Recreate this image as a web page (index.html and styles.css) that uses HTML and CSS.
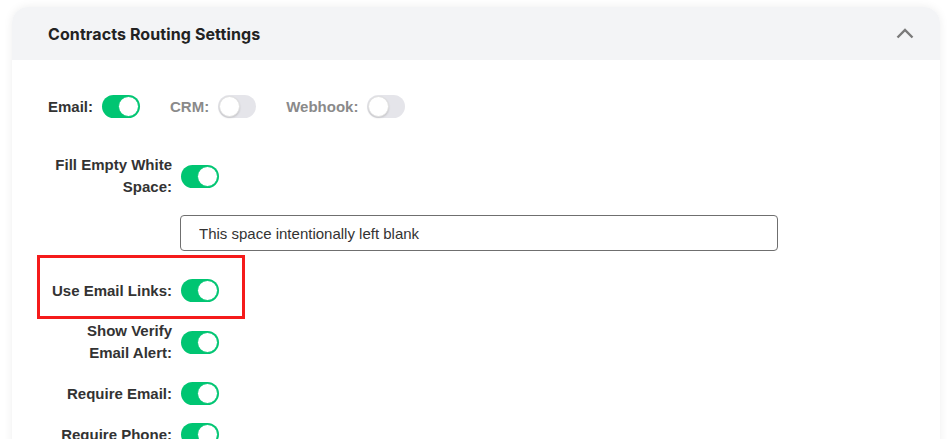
FILE: index.html
```html
<!DOCTYPE html>
<html lang="en">
<head>
    <meta charset="UTF-8">
    <meta name="viewport" content="width=device-width, initial-scale=1.0">
    <title>Contracts Routing Settings</title>
    <link rel="stylesheet" href="styles.css">
</head>
<body>
<div class="page">
    <div class="card">
        <div class="card-header">
            <h2 class="card-title">Contracts Routing Settings</h2>
            <svg class="chevron" width="18" height="11" viewBox="0 0 18 11">
                <polyline points="1.5,9.5 9,2 16.5,9.5" fill="none" stroke="#7a7a7a" stroke-width="2.4"/>
            </svg>
        </div>

        <div class="card-body">
            <div class="channels">
                <div class="channel">
                    <span class="channel-label">Email:</span>
                    <span class="toggle on"></span>
                </div>
                <div class="channel muted">
                    <span class="channel-label">CRM:</span>
                    <span class="toggle"></span>
                </div>
                <div class="channel muted">
                    <span class="channel-label">Webhook:</span>
                    <span class="toggle"></span>
                </div>
            </div>

            <div class="settings">
                <div class="setting">
                    <label class="setting-label">Fill Empty White Space:</label>
                    <span class="toggle on"></span>
                </div>
                <div class="setting-input">
                    <input type="text" value="This space intentionally left blank">
                </div>
                <div class="setting highlighted">
                    <label class="setting-label">Use Email Links:</label>
                    <span class="toggle on"></span>
                    <span class="highlight-box"></span>
                </div>
                <div class="setting">
                    <label class="setting-label">Show Verify Email Alert:</label>
                    <span class="toggle on"></span>
                </div>
                <div class="setting">
                    <label class="setting-label">Require Email:</label>
                    <span class="toggle on"></span>
                </div>
                <div class="setting">
                    <label class="setting-label">Require Phone:</label>
                    <span class="toggle on"></span>
                </div>
            </div>
        </div>
    </div>
</div>
</body>
</html>
```

FILE: styles.css
```css
body {
    margin: 0;
    padding: 0;
    background: #fff;
    font-family: "Liberation Sans", Arial, sans-serif;
    color: #333;
    overflow: hidden;
}

.page {
    padding: 7px 9px 0 12px;
}

.card {
    width: 928px;
    height: 460px;
    border-radius: 16px 16px 0 0;
    background: #fff;
    box-shadow: 0 0 10px rgba(0, 0, 0, 0.07);
    overflow: hidden;
}

.card-header {
    height: 53px;
    background: #f3f4f6;
    display: flex;
    align-items: center;
    justify-content: space-between;
    padding: 0 26px 0 36px;
}

.card-title {
    margin: 0;
    font-family: Inter, "Open Sans", sans-serif;
    font-size: 16px;
    font-weight: 700;
    letter-spacing: 0.1px;
    color: #222;
}

.chevron {
    display: block;
}

.card-body {
    padding: 35px 0 0 36px;
}

/* channel switches */
.channels {
    display: flex;
    align-items: center;
    gap: 30px;
}

.channel {
    display: flex;
    align-items: center;
    gap: 9px;
}

.channel-label {
    font-size: 15px;
    font-weight: 700;
    color: #333;
}

.channel.muted .channel-label {
    color: #8a8a8a;
}

/* toggles */
.toggle {
    position: relative;
    display: inline-block;
    width: 38px;
    height: 23px;
    border-radius: 12px;
    background: #e5e5ea;
    flex-shrink: 0;
}

.toggle::after {
    content: "";
    position: absolute;
    top: 1px;
    left: 1px;
    width: 19px;
    height: 19px;
    border-radius: 50%;
    background: #fff;
    border: 1px solid #e0e0e0;
    box-shadow: 0 1px 2px rgba(0, 0, 0, 0.15);
}

.toggle.on {
    background: #00c572;
}

.toggle.on::after {
    left: 16px;
    border-color: #00c572;
    box-shadow: none;
}

/* settings list */
.settings {
    display: flex;
    flex-direction: column;
    gap: 18px;
    margin-top: 36px;
}

.setting {
    position: relative;
    display: flex;
    align-items: center;
    gap: 9px;
}

.setting-label {
    width: 124px;
    text-align: right;
    font-size: 15px;
    font-weight: 700;
    line-height: 22px;
    color: #333;
}

.setting-input {
    padding-left: 132px;
    margin-top: -1px;
    margin-bottom: 10px;
}

.setting-input input {
    box-sizing: border-box;
    width: 598px;
    height: 36px;
    padding: 0 18px;
    border: 1px solid #6f6f6f;
    border-radius: 4px;
    font-family: "Liberation Sans", Arial, sans-serif;
    font-size: 15px;
    color: #333;
}

.highlight-box {
    position: absolute;
    top: -24px;
    left: -11px;
    width: 208px;
    height: 64px;
    box-sizing: border-box;
    border: 3px solid #f51b1b;
}
```
